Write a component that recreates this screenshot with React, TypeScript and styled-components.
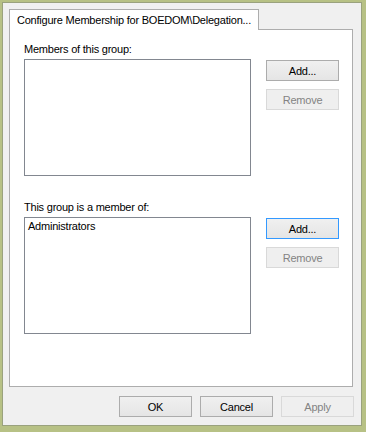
import React from "react";
import styled, { createGlobalStyle } from "styled-components";

const Global = createGlobalStyle`
  html, body { margin: 0; padding: 0; background: #b7c185; }
  body { width: 366px; height: 432px; overflow: hidden; }
  * { box-sizing: border-box; }
`;

const Window = styled.div`
  margin: 2px 0 0 2px;
  width: 360px;
  height: 424px;
  border: 1px solid #9aa27e;
  background: #f0f0f0;
  display: flex;
  flex-direction: column;
  padding: 6px 7px 0 6px;
  font-family: "Liberation Sans", Arial, sans-serif;
  font-size: 11px;
  letter-spacing: -0.22px;
  color: #000;
`;

const TabStrip = styled.div`
  display: flex;
  margin-bottom: -1px;
  position: relative;
  z-index: 1;
`;

const Tab = styled.div`
  height: 21px;
  padding: 0 7px;
  display: flex;
  align-items: center;
  background: #fff;
  border: 1px solid #adadad;
  border-bottom: none;
  white-space: nowrap;
`;

const Panel = styled.div`
  width: 344px;
  height: 358px;
  background: #fff;
  border: 1px solid #adadad;
  padding: 12px 0 0 14px;
  display: flex;
  flex-direction: column;
`;

const Section = styled.div<{ $gap: number }>`
  display: flex;
  flex-direction: column;
  margin-top: ${(p) => p.$gap}px;
`;

const Label = styled.div`
  height: 14px;
  line-height: 14px;
  margin-bottom: 3px;
`;

const Row = styled.div`
  display: flex;
  gap: 15px;
  align-items: flex-start;
`;

const ListBox = styled.div`
  width: 227px;
  height: 117px;
  border: 1px solid #828790;
  background: #fff;
  padding: 2px 3px;
  line-height: 13px;
`;

const ButtonColumn = styled.div`
  display: flex;
  flex-direction: column;
  gap: 8px;
  padding-top: 1px;
`;

const Button = styled.button<{ $focused?: boolean }>`
  width: 73px;
  height: 21px;
  margin: 0;
  padding: 0;
  font-family: "Liberation Sans", Arial, sans-serif;
  font-size: 11px;
  letter-spacing: -0.22px;
  color: #000;
  border: 1px solid ${(p) => (p.$focused ? "#3399ff" : "#acacac")};
  background: linear-gradient(#f0f0f0, #e5e5e5);
  border-radius: 0;
  &:disabled {
    color: #838383;
    border-color: #d9d9d9;
    background: #efefef;
  }
`;

const Footer = styled.div`
  display: flex;
  justify-content: flex-end;
  gap: 8px;
  margin-top: 9px;
`;

export default function App() {
  return (
    <>
      <Global />
      <Window>
        <TabStrip>
          <Tab>Configure Membership for BOEDOM\Delegation...</Tab>
        </TabStrip>
        <Panel>
          <Section $gap={0}>
            <Label>Members of this group:</Label>
            <Row>
              <ListBox />
              <ButtonColumn>
                <Button>Add...</Button>
                <Button disabled>Remove</Button>
              </ButtonColumn>
            </Row>
          </Section>
          <Section $gap={24}>
            <Label>This group is a member of:</Label>
            <Row>
              <ListBox>Administrators</ListBox>
              <ButtonColumn>
                <Button $focused>Add...</Button>
                <Button disabled>Remove</Button>
              </ButtonColumn>
            </Row>
          </Section>
        </Panel>
        <Footer>
          <Button>OK</Button>
          <Button>Cancel</Button>
          <Button disabled>Apply</Button>
        </Footer>
      </Window>
    </>
  );
}
